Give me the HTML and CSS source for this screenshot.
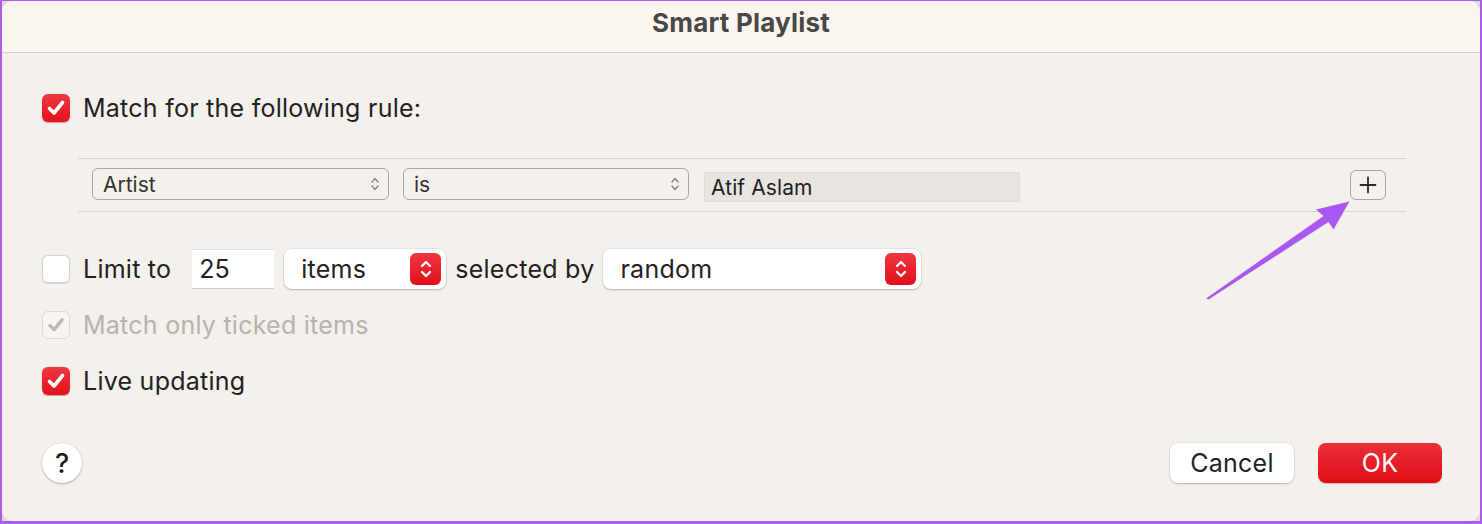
FILE: index.html
```html
<!DOCTYPE html>
<html lang="en">
<head>
<meta charset="utf-8">
<title>Smart Playlist</title>
<link rel="stylesheet" href="styles.css">
</head>
<body>
<div class="frame">
  <div class="dialog">
    <div class="titlebar"><span class="title">Smart Playlist</span></div>
    <div class="content">
      <div class="row-match">
        <span class="cb cb-on"><svg viewBox="0 0 28 28" width="28" height="28"><path d="M7.5 14.5 L12 19 L20.5 8.5" fill="none" stroke="#fff" stroke-width="3.6" stroke-linecap="round" stroke-linejoin="round"/></svg></span>
        <span class="label">Match for the following rule:</span>
      </div>

      <div class="rules">
        <div class="rpopup w-artist"><span>Artist</span><svg class="chev" viewBox="0 0 10 18" width="10" height="18"><path d="M2 7 L5 3.5 L8 7 M2 11 L5 14.5 L8 11" fill="none" stroke="#8c8884" stroke-width="1.4" stroke-linecap="round" stroke-linejoin="round"/></svg></div>
        <div class="rpopup w-is"><span>is</span><svg class="chev" viewBox="0 0 10 18" width="10" height="18"><path d="M2 7 L5 3.5 L8 7 M2 11 L5 14.5 L8 11" fill="none" stroke="#8c8884" stroke-width="1.4" stroke-linecap="round" stroke-linejoin="round"/></svg></div>
        <div class="textfield">Atif Aslam</div>
        <div class="grow"></div>
        <div class="plus"><svg viewBox="0 0 20 20" width="20" height="20"><path d="M10 2.5 V17.5 M2.5 10 H17.5" stroke="#2a2a2a" stroke-width="1.8" stroke-linecap="round"/></svg></div>
      </div>

      <div class="opt opt-limit">
        <span class="cb cb-off"></span>
        <span class="label">Limit to</span>
        <div class="numfield">25</div>
        <div class="popup w-items"><span>items</span><span class="stepper"><svg viewBox="0 0 14 24" width="14" height="24"><path d="M3 9 L7 5 L11 9 M3 15 L7 19 L11 15" fill="none" stroke="#fff" stroke-width="2.3" stroke-linecap="round" stroke-linejoin="round"/></svg></span></div>
        <span class="label sel">selected by</span>
        <div class="popup w-random"><span>random</span><span class="stepper"><svg viewBox="0 0 14 24" width="14" height="24"><path d="M3 9 L7 5 L11 9 M3 15 L7 19 L11 15" fill="none" stroke="#fff" stroke-width="2.3" stroke-linecap="round" stroke-linejoin="round"/></svg></span></div>
      </div>

      <div class="opt opt-disabled">
        <span class="cb cb-dis"><svg viewBox="0 0 28 28" width="28" height="28"><path d="M7.5 14.5 L12 19 L20.5 8.5" fill="none" stroke="#bcb8b4" stroke-width="3.6" stroke-linecap="round" stroke-linejoin="round"/></svg></span>
        <span class="label">Match only ticked items</span>
      </div>

      <div class="opt">
        <span class="cb cb-on"><svg viewBox="0 0 28 28" width="28" height="28"><path d="M7.5 14.5 L12 19 L20.5 8.5" fill="none" stroke="#fff" stroke-width="3.6" stroke-linecap="round" stroke-linejoin="round"/></svg></span>
        <span class="label">Live updating</span>
      </div>

      <div class="footer">
        <div class="help">?</div>
        <div class="grow"></div>
        <div class="btn btn-cancel">Cancel</div>
        <div class="btn btn-ok">OK</div>
      </div>
    </div>
  </div>
  <svg class="arrow" viewBox="0 0 1482 524" width="1482" height="524">
    <polygon points="1206,298.5 1323.5,216 1316,209.5 1349.5,201.5 1333.5,229.5 1328.5,222 1208.5,299.5" fill="#a958f2"/>
  </svg>
</div>
</body>
</html>
```

FILE: styles.css
```css
* { box-sizing: border-box; }

html, body {
  margin: 0;
  padding: 0;
  background: #ffffff;
}

body {
  font-family: "Inter", "Noto Sans", "Liberation Sans", sans-serif;
  color: #232222;
}

.frame {
  position: relative;
  width: 1482px;
  height: 524px;
  border: 2px solid #ad5cf0;
  border-top-width: 1px;
  border-bottom-width: 3px;
  background: #dedad6;
}

.dialog {
  width: 100%;
  height: 100%;
  background: #f4f0eb;
  border-radius: 11px;
  overflow: hidden;
  display: flex;
  flex-direction: column;
}

.titlebar {
  height: 52px;
  flex: none;
  background: #fbf5f0;
  border-bottom: 1px solid #d3cec9;
  display: flex;
  align-items: center;
  justify-content: center;
}

.title {
  font-weight: 700;
  font-size: 26px;
  color: #4a4847;
  letter-spacing: 0.2px;
  margin-top: -8px;
}

.content {
  flex: 1;
  padding: 0 38px 0 40px;
  display: flex;
  flex-direction: column;
}

.label {
  font-size: 25px;
  line-height: 28px;
  letter-spacing: 0.25px;
  color: #232222;
  white-space: nowrap;
}

.cb {
  width: 28px;
  height: 28px;
  flex: none;
  border-radius: 6px;
  display: flex;
  align-items: center;
  justify-content: center;
}

.cb-on {
  background: linear-gradient(#ee3942, #e2111d);
  box-shadow: 0 0.5px 1px rgba(120, 0, 0, 0.35);
}

.cb-off {
  background: #ffffff;
  border: 1px solid #d6d2ce;
  box-shadow: 0 0.5px 1px rgba(0, 0, 0, 0.12);
}

.cb-dis {
  background: #f7f4f1;
  border: 1px solid #dedad6;
}

.row-match {
  margin-top: 41px;
  height: 28px;
  display: flex;
  align-items: center;
  gap: 13px;
}

.rules {
  margin: 36px 36px 0 36px;
  height: 54px;
  border-top: 1px solid #d9d4cf;
  border-bottom: 1px solid #d9d4cf;
  padding: 9px 20px 0 14px;
  display: flex;
  align-items: flex-start;
}

.rpopup {
  height: 32px;
  border: 1.5px solid #a9a49f;
  border-radius: 6px;
  display: flex;
  align-items: center;
  justify-content: space-between;
  padding: 0 8px 0 10px;
  font-size: 21px;
  letter-spacing: 0;
  color: #333;
}

.w-artist { width: 297px; }
.w-is { width: 286px; margin-left: 14px; }

.textfield {
  margin-left: 15px;
  margin-top: 4px;
  width: 316px;
  height: 30px;
  background: #e8e4df;
  border: 1px solid #dfdbd6;
  padding: 0 6px;
  display: flex;
  align-items: center;
  font-size: 21px;
  letter-spacing: 0.1px;
  color: #222;
}

.grow { flex: 1; }

.plus {
  margin-top: 2px;
  width: 36px;
  height: 30px;
  border: 1.5px solid #a9a49f;
  border-radius: 6px;
  display: flex;
  align-items: center;
  justify-content: center;
}

.opt {
  height: 56px;
  display: flex;
  align-items: center;
  gap: 13px;
}

.opt-limit {
  margin-top: 29px;
}

.numfield {
  margin-left: 8px;
  width: 82px;
  height: 40px;
  background: #ffffff;
  border-top: 1px solid #e6e2de;
  border-bottom: 1px solid #cfcbc7;
  padding: 0 7px;
  display: flex;
  align-items: center;
  font-size: 25px;
  color: #232222;
}

.popup {
  height: 40px;
  background: #ffffff;
  border-radius: 8px;
  box-shadow: 0 0 0 0.5px rgba(0, 0, 0, 0.08), 0 1px 2px rgba(0, 0, 0, 0.22);
  display: flex;
  align-items: center;
  justify-content: space-between;
  padding: 0 5px 0 17px;
  font-size: 25px;
  letter-spacing: 0.25px;
  color: #232222;
}

.w-items { width: 162px; margin-left: -3px; }
.w-random { width: 318px; margin-left: -4px; }
.sel { margin-left: -4px; }

.stepper {
  width: 31px;
  height: 32px;
  border-radius: 6px;
  background: linear-gradient(#ef3841, #e20f1b);
  display: flex;
  align-items: center;
  justify-content: center;
}

.opt-disabled .label {
  color: #b7b3af;
}

.footer {
  margin-top: 34px;
  height: 40px;
  display: flex;
  align-items: center;
}

.help {
  width: 40px;
  height: 40px;
  border-radius: 50%;
  background: #ffffff;
  box-shadow: 0 0 0 0.5px rgba(0, 0, 0, 0.08), 0 1px 2px rgba(0, 0, 0, 0.25);
  display: flex;
  align-items: center;
  justify-content: center;
  font-size: 27px;
  font-weight: 500;
  color: #1f1f1f;
}

.btn {
  width: 124px;
  height: 40px;
  border-radius: 8px;
  display: flex;
  align-items: center;
  justify-content: center;
  font-size: 25px;
  letter-spacing: 0.25px;
}

.btn-cancel {
  background: #ffffff;
  color: #232222;
  box-shadow: 0 0 0 0.5px rgba(0, 0, 0, 0.08), 0 1px 2px rgba(0, 0, 0, 0.22);
}

.btn-ok {
  margin-left: 24px;
  background: linear-gradient(#ea3039, #e00d17);
  color: #ffffff;
  box-shadow: 0 1px 1px rgba(120, 0, 0, 0.25);
}

.arrow {
  position: absolute;
  left: -2px;
  top: -1px;
  pointer-events: none;
}
```
